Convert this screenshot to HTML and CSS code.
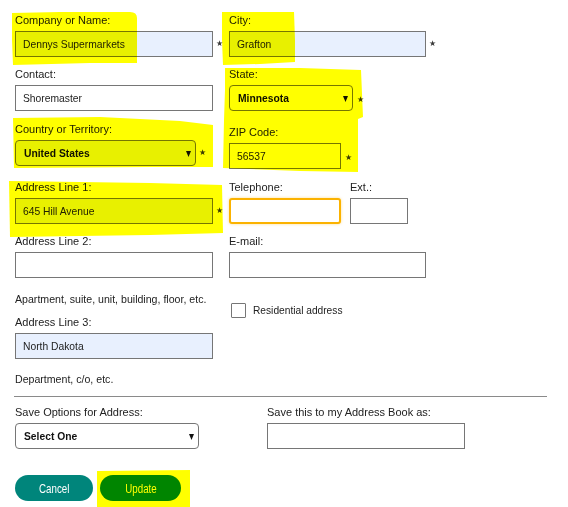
FILE: index.html
```html
<!DOCTYPE html>
<html lang="en">
<head>
<meta charset="utf-8">
<title>Edit Address</title>
<link rel="stylesheet" href="styles.css">
</head>
<body>
<form class="form">
  <div class="columns">
    <div class="col">
      <div class="field">
        <label class="lbl">Company or Name:</label>
        <div class="row"><input class="inp w198 autofill" value="Dennys Supermarkets"><span class="req">★</span></div>
      </div>
      <div class="field mt11">
        <label class="lbl">Contact:</label>
        <div class="row"><input class="inp w198" value="Shoremaster"></div>
      </div>
      <div class="field mt12">
        <label class="lbl">Country or Territory:</label>
        <div class="row"><div class="select w181 autofill"><span>United States</span><svg class="arrow" width="5" height="6" viewBox="0 0 5 6"><polygon points="0,0 5,0 2.5,6"/></svg></div><span class="req">★</span></div>
      </div>
      <div class="field mt15">
        <label class="lbl">Address Line 1:</label>
        <div class="row"><input class="inp w198 autofill" value="645 Hill Avenue"><span class="req">★</span></div>
      </div>
      <div class="field mt11">
        <label class="lbl">Address Line 2:</label>
        <div class="row"><input class="inp w198" value=""></div>
      </div>
      <p class="help mt15">Apartment, suite, unit, building, floor, etc.</p>
      <div class="field mt10">
        <label class="lbl">Address Line 3:</label>
        <div class="row"><input class="inp w198 autofill" value="North Dakota"></div>
      </div>
      <p class="help mt14">Department, c/o, etc.</p>
    </div>
    <div class="col">
      <div class="field">
        <label class="lbl">City:</label>
        <div class="row"><input class="inp w197 autofill" value="Grafton"><span class="req">★</span></div>
      </div>
      <div class="field mt11">
        <label class="lbl">State:</label>
        <div class="row"><div class="select w124"><span>Minnesota</span><svg class="arrow" width="5" height="6" viewBox="0 0 5 6"><polygon points="0,0 5,0 2.5,6"/></svg></div><span class="req low">★</span></div>
      </div>
      <div class="field mt15">
        <label class="lbl">ZIP Code:</label>
        <div class="row"><input class="inp w112" value="56537"><span class="req low">★</span></div>
      </div>
      <div class="pair mt12">
        <div class="field">
          <label class="lbl">Telephone:</label>
          <div class="row"><input class="inp w112 focus" value=""></div>
        </div>
        <div class="field">
          <label class="lbl">Ext.:</label>
          <div class="row"><input class="inp w58" value=""></div>
        </div>
      </div>
      <div class="field mt11">
        <label class="lbl">E-mail:</label>
        <div class="row"><input class="inp w197" value=""></div>
      </div>
      <label class="check mt25"><span class="box"></span><span class="check-text">Residential address</span></label>
    </div>
  </div>
  <div class="rule"></div>
  <div class="save">
    <div class="field">
      <label class="lbl">Save Options for Address:</label>
      <div class="row"><div class="select w184"><span>Select One</span><svg class="arrow" width="5" height="6" viewBox="0 0 5 6"><polygon points="0,0 5,0 2.5,6"/></svg></div></div>
    </div>
    <div class="field">
      <label class="lbl">Save this to my Address Book as:</label>
      <div class="row"><input class="inp w198" value=""></div>
    </div>
  </div>
  <div class="actions">
    <button type="button" class="btn cancel"><span class="btn-text">Cancel</span></button>
    <button type="button" class="btn update"><span class="btn-text">Update</span></button>
  </div>
</form>
<svg class="marker" width="568" height="507" viewBox="0 0 568 507" aria-hidden="true">
  <path d="M12,13 L60,12 L130,12 Q137,12 137,18 L137,63 L90,63 L13,65 L12,40 Z"/>
  <path d="M222,12 L294,12 L295,40 L295,62 L260,64 L223,65 L222,40 Z"/>
  <path d="M225,68 L300,68 L361,70 L363,117 L358,119 L358,172 L300,171 L223,168 L224,120 L225,90 Z"/>
  <path d="M13,118 L100,117 L180,121 L213,125 L213,167 L150,167 L14,168 Z"/>
  <path d="M9,181 L150,183 L222,185 L223,233 L150,235 L10,237 Z"/>
  <path d="M97,471 L190,470 L190,507 L97,507 Z"/>
</svg>
</body>
</html>
```
FILE: styles.css
```css
html { background: #ffffff; }
body {
  margin: 0;
  position: relative;
  width: 568px;
  height: 507px;
  overflow: hidden;
  font-family: "Liberation Sans", Arial, sans-serif;
  color: #222222;
  background: #ffffff;
}
.form { padding: 14px 0 0 15px; }
.columns {
  display: grid;
  grid-template-columns: 214px 320px;
}
.col { display: flex; flex-direction: column; }
.field { display: flex; flex-direction: column; }
.lbl {
  display: block;
  font-size: 11px;
  line-height: 13px;
  height: 13px;
  margin-bottom: 4px;
  color: #222222;
  white-space: nowrap;
}
.row { display: flex; align-items: center; }
.inp {
  box-sizing: border-box;
  height: 26px;
  border: 1px solid #767676;
  border-radius: 0;
  padding: 0 0 0 7px;
  margin: 0;
  font-family: "Liberation Sans", Arial, sans-serif;
  font-size: 10.3px;
  color: #222222;
  background: #ffffff;
  outline: none;
}
.autofill { background: #e8f0fe; }
.focus {
  border: 2px solid #fbb200;
  border-radius: 3px;
  box-shadow: 0 0 3px rgba(251, 178, 0, 0.45);
}
.w198 { width: 198px; }
.w197 { width: 197px; }
.w184 { width: 184px; }
.w181 { width: 181px; }
.w124 { width: 124px; }
.w112 { width: 112px; }
.w58 { width: 58px; }
.select {
  box-sizing: border-box;
  height: 26px;
  border: 1px solid #767676;
  border-radius: 4px;
  background: #ffffff;
  display: flex;
  align-items: center;
  justify-content: space-between;
  padding: 0 4px 0 8px;
  font-size: 10.3px;
  font-weight: bold;
  color: #111111;
}
.select.autofill { background: #e8f0fe; }
.arrow { fill: #111111; display: block; margin-top: 2px; }
.req {
  font-family: "DejaVu Sans", sans-serif;
  font-size: 8px;
  color: #3a3a3a;
  margin-left: 3px;
  line-height: 8px;
}
.req.low { margin-left: 4px; position: relative; top: 2px; }
.help {
  margin: 0;
  font-size: 10.6px;
  line-height: 13px;
  color: #222222;
  white-space: nowrap;
}
.pair { display: flex; gap: 9px; }
.check {
  display: flex;
  align-items: center;
  padding-left: 2px;
  height: 15px;
}
.box {
  box-sizing: border-box;
  width: 15px;
  height: 15px;
  border: 1px solid #767676;
  border-radius: 1px;
  background: #ffffff;
}
.check-text {
  margin-left: 7px;
  font-size: 10.2px;
  color: #222222;
}
.mt10 { margin-top: 10px; }
.mt11 { margin-top: 11px; }
.mt12 { margin-top: 12px; }
.mt14 { margin-top: 14px; }
.mt15 { margin-top: 15px; }
.mt25 { margin-top: 25px; }
.rule {
  margin: 10px 0 0 -1px;
  width: 533px;
  border-top: 1px solid #8a8a8a;
}
.save {
  margin-top: 9px;
  display: grid;
  grid-template-columns: 252px 260px;
}
.actions {
  margin-top: 26px;
  display: flex;
  gap: 7px;
}
.btn {
  height: 26px;
  border: none;
  border-radius: 13px;
  background: #00857b;
  color: #ffffff;
  font-family: "Liberation Sans", Arial, sans-serif;
  font-size: 13px;
  padding: 0;
  cursor: pointer;
}
.btn-text {
  display: inline-block;
  transform: scaleX(0.75);
}
.cancel { width: 78px; }
.update { width: 81px; }
.marker {
  position: absolute;
  left: 0;
  top: 0;
  pointer-events: none;
  mix-blend-mode: multiply;
  fill: #ffff00;
}
```
